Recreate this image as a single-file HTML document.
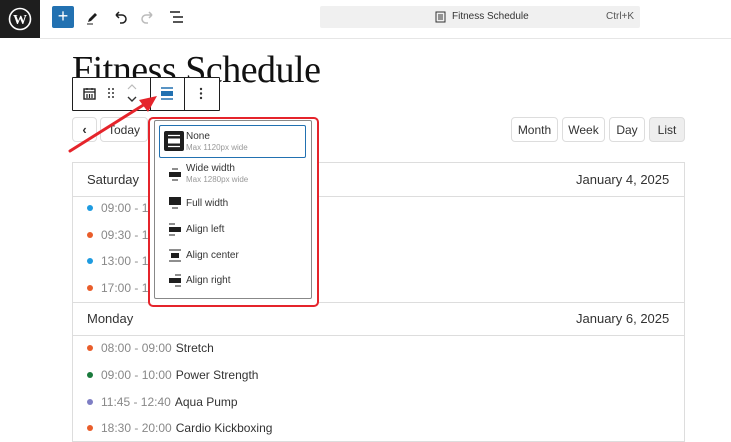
<!DOCTYPE html>
<html><head><meta charset="utf-8"><style>
*{box-sizing:border-box;margin:0;padding:0}
body{width:731px;height:436px;overflow:hidden;background:#fff;font-family:"Liberation Sans",sans-serif;position:relative;color:#1e1e1e}
.abs{position:absolute}
.btn{position:absolute;top:117px;height:25px;border:1px solid #ddd;border-radius:4px;font-size:12px;color:#333;display:flex;align-items:center;justify-content:center;background:#fff}
.row{position:absolute;left:87px;font-size:12px;color:#888;display:flex;align-items:center}
.dot{width:6px;height:6px;border-radius:50%;margin-right:8px}
.row b{font-weight:normal;color:#333;margin-left:4px}
.it{position:absolute;left:186px;font-size:10px;color:#333}
.it small{display:block;font-size:8px;color:#999}
</style></head><body>
<div class="abs" style="left:0;top:0;width:40px;height:38px;background:#1e1e1e"></div>
<svg class="abs" style="left:8px;top:7px" width="24" height="24" viewBox="0 0 24 24"><circle cx="12" cy="12" r="10.5" fill="none" stroke="#fff" stroke-width="1.6"/><text x="12" y="17" font-family="Liberation Serif" font-weight="bold" font-size="14" fill="#fff" text-anchor="middle">W</text></svg>
<div class="abs" style="left:52px;top:6px;width:22px;height:22px;background:#2271b1;border-radius:2px;color:#fff;font-size:18px;line-height:21px;text-align:center">+</div>
<svg class="abs" style="left:84px;top:9px" width="16" height="16"><path d="M4 13l1-3 6-6 2 2-6 6z" fill="#1e1e1e"/><path d="M3 15h6" stroke="#1e1e1e"/></svg>
<svg class="abs" style="left:112px;top:9px" width="16" height="16"><path d="M4 6h6a4 4 0 010 8H8M4 6l3-3M4 6l3 3" stroke="#1e1e1e" stroke-width="1.5" fill="none"/></svg>
<svg class="abs" style="left:140px;top:9px" width="16" height="16"><path d="M12 6H6a4 4 0 000 8h2M12 6L9 3M12 6L9 9" stroke="#bbb" stroke-width="1.5" fill="none"/></svg>
<svg class="abs" style="left:169px;top:10px" width="16" height="14"><path d="M1 2h10M4 7h10M4 12h10" stroke="#1e1e1e" stroke-width="1.5"/></svg>
<div class="abs" style="left:320px;top:6px;width:320px;height:22px;background:#f0f0f0;border-radius:2px"></div>
<svg class="abs" style="left:435px;top:11px" width="11" height="12"><rect x="1" y="1" width="9" height="10" fill="none" stroke="#333"/><path d="M3 4h5M3 6h5M3 8h5" stroke="#333"/></svg>
<div class="abs" style="left:452px;top:11px;font-size:10px;color:#333">Fitness Schedule</div>
<div class="abs" style="left:606px;top:11px;font-size:10px;color:#555">Ctrl+K</div>
<div class="abs" style="left:40px;top:38px;width:691px;height:1px;background:#e6e6e6"></div>
<div class="abs" style="left:72px;top:48px;font-family:'Liberation Serif',serif;font-size:38px;color:#111;letter-spacing:-0.5px">Fitness Schedule</div>
<div class="abs" style="left:72px;top:77px;width:148px;height:34px;border:1px solid #1e1e1e;background:#fff;border-radius:1px"></div>
<div class="abs" style="left:150px;top:77px;width:1px;height:34px;background:#1e1e1e"></div>
<div class="abs" style="left:184px;top:77px;width:1px;height:34px;background:#1e1e1e"></div>
<svg class="abs" style="left:83px;top:87px" width="13" height="13"><rect x="1" y="2" width="11" height="10" fill="none" stroke="#222" stroke-width="1.4"/><path d="M1 5h11M4 7v4M6.5 7v4M9 7v4M4 1v2M9 1v2" stroke="#222" stroke-width="1.2"/></svg>
<svg class="abs" style="left:107px;top:87px" width="8" height="13"><g fill="#333"><circle cx="2" cy="2" r="1"/><circle cx="6" cy="2" r="1"/><circle cx="2" cy="6" r="1"/><circle cx="6" cy="6" r="1"/><circle cx="2" cy="10" r="1"/><circle cx="6" cy="10" r="1"/></g></svg>
<svg class="abs" style="left:126px;top:83px" width="12" height="22"><path d="M2 6l4-4 4 4" stroke="#bbb" fill="none" stroke-width="1.2"/><path d="M2 14l4 4 4-4" stroke="#333" fill="none" stroke-width="1.4"/></svg>
<svg class="abs" style="left:161px;top:87px" width="12" height="13"><path d="M0 1h12M0 12h12" stroke="#2271b1" stroke-width="1.4"/><rect x="0" y="4" width="12" height="5" fill="#2271b1"/></svg>
<svg class="abs" style="left:199px;top:87px" width="4" height="13"><g fill="#333"><circle cx="2" cy="2" r="1.2"/><circle cx="2" cy="6.5" r="1.2"/><circle cx="2" cy="11" r="1.2"/></g></svg>
<div class="btn" style="left:72px;width:25px;font-weight:bold;font-size:13px">‹</div>
<div class="btn" style="left:100px;width:48px">Today</div>
<div class="btn" style="left:511px;width:47px">Month</div>
<div class="btn" style="left:562px;width:43px">Week</div>
<div class="btn" style="left:609px;width:36px">Day</div>
<div class="btn" style="left:649px;width:36px;background:#eee">List</div>
<div class="abs" style="left:72px;top:162px;width:613px;height:280px;border:1px solid #ddd"></div>
<div class="abs" style="left:72px;top:196px;width:613px;height:1px;background:#ddd"></div>
<div class="abs" style="left:72px;top:302px;width:613px;height:1px;background:#ddd"></div>
<div class="abs" style="left:72px;top:335px;width:613px;height:1px;background:#ddd"></div>
<div class="abs" style="left:87px;top:172px;font-size:13px;color:#333">Saturday</div>
<div class="abs" style="left:576px;top:172px;font-size:13px;color:#333">January 4, 2025</div>
<div class="abs" style="left:87px;top:311px;font-size:13px;color:#333">Monday</div>
<div class="abs" style="left:576px;top:311px;font-size:13px;color:#333">January 6, 2025</div>
<div class="row" style="top:201px"><span class="dot" style="background:#1e9be0"></span>09:00 - 10:00</div>
<div class="row" style="top:228px"><span class="dot" style="background:#e95d2a"></span>09:30 - 11:00</div>
<div class="row" style="top:254px"><span class="dot" style="background:#1e9be0"></span>13:00 - 14:00</div>
<div class="row" style="top:281px"><span class="dot" style="background:#e95d2a"></span>17:00 - 18:00</div>
<div class="row" style="top:341px"><span class="dot" style="background:#e95d2a"></span>08:00 - 09:00<b>Stretch</b></div>
<div class="row" style="top:368px"><span class="dot" style="background:#1a7a3c"></span>09:00 - 10:00<b>Power Strength</b></div>
<div class="row" style="top:395px"><span class="dot" style="background:#7e7ec4"></span>11:45 - 12:40<b>Aqua Pump</b></div>
<div class="row" style="top:421px"><span class="dot" style="background:#e95d2a"></span>18:30 - 20:00<b>Cardio Kickboxing</b></div>
<div class="abs" style="left:148px;top:117px;width:171px;height:190px;border:2px solid #e5242b;border-radius:5px;background:#fff"></div>
<div class="abs" style="left:154px;top:120px;width:158px;height:179px;border:1px solid #888;border-radius:2px;background:#fff"></div>
<div class="abs" style="left:159px;top:125px;width:147px;height:33px;border:1.5px solid #2271b1;border-radius:2px"></div>
<svg class="abs" style="left:164px;top:131px" width="20" height="20"><rect width="20" height="20" rx="2" fill="#1e1e1e"/><path d="M4 4.5h12M4 15.5h12" stroke="#fff" stroke-width="1.3"/><rect x="4" y="7.5" width="12" height="5" fill="#fff"/></svg>
<div class="it" style="top:131px;line-height:11px">None<small>Max 1120px wide</small></div>
<svg class="abs" style="left:169px;top:168px" width="12" height="13"><path d="M3 1h6M3 12h6" stroke="#1e1e1e"/><rect x="0" y="4" width="12" height="5" fill="#1e1e1e"/></svg>
<div class="it" style="top:163px;line-height:11px">Wide width<small>Max 1280px wide</small></div>
<svg class="abs" style="left:169px;top:197px" width="12" height="13"><rect x="0" y="0" width="12" height="8" fill="#1e1e1e"/><path d="M3 11h6" stroke="#1e1e1e"/></svg>
<div class="it" style="top:198px">Full width</div>
<svg class="abs" style="left:169px;top:223px" width="12" height="13"><path d="M0 1h6M0 12h6" stroke="#1e1e1e"/><rect x="0" y="4" width="12" height="5" fill="#1e1e1e"/></svg>
<div class="it" style="top:224px">Align left</div>
<svg class="abs" style="left:169px;top:249px" width="12" height="13"><path d="M0 1h12M0 12h12" stroke="#1e1e1e"/><rect x="2" y="4" width="8" height="5" fill="#1e1e1e"/></svg>
<div class="it" style="top:250px">Align center</div>
<svg class="abs" style="left:169px;top:274px" width="12" height="13"><path d="M6 1h6M6 12h6" stroke="#1e1e1e"/><rect x="0" y="4" width="12" height="5" fill="#1e1e1e"/></svg>
<div class="it" style="top:275px">Align right</div>
<svg class="abs" style="left:0;top:0" width="731" height="436"><path d="M70 151L145 104" stroke="#e5242b" stroke-width="3" stroke-linecap="round"/><path d="M157 96L139 100L148 112Z" fill="#e5242b"/></svg>
</body></html>
